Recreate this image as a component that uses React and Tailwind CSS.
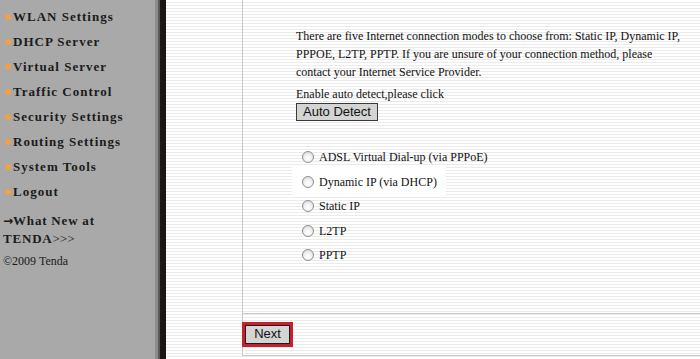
import React from "react";

const menu = [
  "WLAN Settings",
  "DHCP Server",
  "Virtual Server",
  "Traffic Control",
  "Security Settings",
  "Routing Settings",
  "System Tools",
  "Logout",
];

function Radio() {
  return (
    <span className="inline-block w-[12px] h-[12px] rounded-full border border-[#8e8f8f] bg-[radial-gradient(circle_at_50%_65%,#ffffff_0%,#f1f1f1_45%,#cfcfcf_100%)] shrink-0" />
  );
}

const options = [
  "ADSL Virtual Dial-up (via PPPoE)",
  "Dynamic IP (via DHCP)",
  "Static IP",
  "L2TP",
  "PPTP",
];

export default function App() {
  const stripes =
    "bg-[repeating-linear-gradient(to_bottom,#ffffff_0px,#ffffff_2px,#ebebeb_2px,#ebebeb_3px)]";
  return (
    <div className="flex w-[700px] h-[359px] overflow-hidden font-['Liberation_Serif',serif] text-[#111]">
      <div className="w-[155px] shrink-0 bg-[#a9a9a9] pt-[4px]">
        {menu.map((m) => (
          <div key={m} className="h-[25px] flex items-center">
            <span className="w-[6px] h-[6px] rounded-full bg-[#f5a043] ml-[5px] mr-[2px] shrink-0" />
            <span className="text-[13px] font-bold tracking-[1px] text-[#1b1b1b] whitespace-nowrap">{m}</span>
          </div>
        ))}
        <div className="mt-[8px] pl-[3px] text-[13px] leading-[18px] font-bold tracking-[0.8px] text-[#1b1b1b]">
          <div>
            <span className="font-['DejaVu_Sans',sans-serif] text-[12px] tracking-normal">→</span>What New at
          </div>
          <div>
            TENDA<span className="font-normal tracking-normal">&gt;&gt;&gt;</span>
          </div>
        </div>
        <div className="pl-[3px] mt-[4px] text-[12px] text-[#1b1b1b]">©2009 Tenda</div>
      </div>
      <div className="w-[3px] shrink-0 bg-[#8d8d8d]" />
      <div className="w-[2px] shrink-0 bg-[#5a5a5a]" />
      <div className="w-[6px] shrink-0 bg-[#1b1712]" />
      <div className={`flex-1 flex ${stripes}`}>
        <div className="w-[76px] shrink-0" />
        <div className="flex-1 flex flex-col border-l border-[#c9c9c9] h-[356px] border-b">
          <div className="h-[314px] border-b border-[#c9c9c9] pl-[53px] pt-[27px]">
            <div className="leading-[18px] whitespace-nowrap text-[12px]">
              There are five Internet connection modes to choose from: Static IP, Dynamic IP,
              <br />
              PPPOE, L2TP, PPTP. If you are unsure of your connection method, please
              <br />
              contact your Internet Service Provider.
            </div>
            <div className="mt-[4px] leading-[18px] text-[12px]">Enable auto detect,please click</div>
            <button className="block w-[82px] h-[18px] border border-[#3a3a3a] bg-[#d4d4d4] font-['Liberation_Sans',sans-serif] text-[13px] leading-[16px] text-[#111]">
              Auto Detect
            </button>
            <div className="mt-[24px] -ml-[4px]">
              {options.map((o, i) => (
                <div
                  key={o}
                  className={`flex items-center w-[154px] h-[24.5px] whitespace-nowrap ${i === 1 ? "bg-white h-[29px] -my-[2.25px]" : ""}`}
                >
                  <span className="ml-[10px] mr-[5px] flex">
                    <Radio />
                  </span>
                  <span className="text-[12px]">{o}</span>
                </div>
              ))}
            </div>
          </div>
          <div className="pt-[7px]">
            <div className="inline-flex border-[3px] border-[#c6202d] -ml-[1px] p-[0px]">
              <button className="w-[45px] h-[19px] border border-[#1a1a1a] bg-[#d4d4d4] font-['Liberation_Sans',sans-serif] text-[13px] leading-[16px] text-[#111]">
                Next
              </button>
            </div>
          </div>
        </div>
      </div>
    </div>
  );
}
